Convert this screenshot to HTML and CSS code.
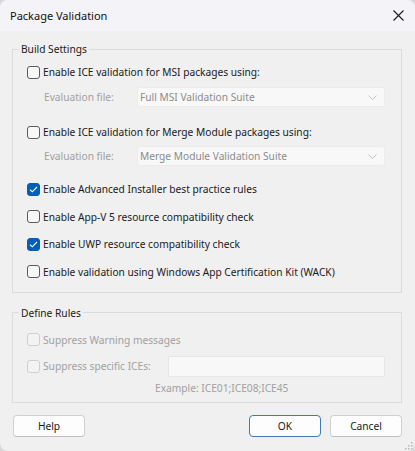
FILE: index.html
```html
<!DOCTYPE html>
<html>
<head>
<meta charset="utf-8">
<link rel="stylesheet" href="styles.css">
</head>
<body>
<div class="window">
  <div class="titlebar">
    <span class="title">Package Validation</span>
    <svg class="close" width="11" height="11" viewBox="0 0 11 11"><path d="M0.5 0.5L10.5 10.5M10.5 0.5L0.5 10.5" stroke="#1b1b1b" stroke-width="1.1" fill="none"/></svg>
  </div>
  <div class="body">
    <fieldset class="group build">
      <legend>Build Settings</legend>
      <div class="inner">
        <label class="check r1"><span class="box"></span><span>Enable ICE validation for MSI packages using:</span></label>
        <div class="evalrow r2"><span class="evallabel">Evaluation file:</span><div class="combo"><span>Full MSI Validation Suite</span><svg class="chev" width="9" height="5" viewBox="0 0 9 5"><path d="M0.5 0.5L4.5 4.5L8.5 0.5" stroke="#c4c4c4" fill="none"/></svg></div></div>
        <label class="check r3"><span class="box"></span><span>Enable ICE validation for Merge Module packages using:</span></label>
        <div class="evalrow r4"><span class="evallabel">Evaluation file:</span><div class="combo"><span>Merge Module Validation Suite</span><svg class="chev" width="9" height="5" viewBox="0 0 9 5"><path d="M0.5 0.5L4.5 4.5L8.5 0.5" stroke="#c4c4c4" fill="none"/></svg></div></div>
        <label class="check r5"><span class="box checked"><svg width="9" height="7" viewBox="0 0 9 7"><path d="M1 3.6L3.3 5.8L8 1" stroke="#fff" stroke-width="1.1" fill="none"/></svg></span><span>Enable Advanced Installer best practice rules</span></label>
        <label class="check r6"><span class="box"></span><span>Enable App-V 5 resource compatibility check</span></label>
        <label class="check r6"><span class="box checked"><svg width="9" height="7" viewBox="0 0 9 7"><path d="M1 3.6L3.3 5.8L8 1" stroke="#fff" stroke-width="1.1" fill="none"/></svg></span><span>Enable UWP resource compatibility check</span></label>
        <label class="check r6"><span class="box"></span><span>Enable validation using Windows App Certification Kit (WACK)</span></label>
      </div>
    </fieldset>
    <fieldset class="group rules">
      <legend>Define Rules</legend>
      <div class="inner">
        <label class="check disabled s1"><span class="box"></span><span>Suppress Warning messages</span></label>
        <div class="supprow">
          <label class="check disabled"><span class="box"></span><span>Suppress specific ICEs:</span></label>
          <div class="textfield"></div>
        </div>
        <div class="example">Example: ICE01;ICE08;ICE45</div>
      </div>
    </fieldset>
    <div class="buttons">
      <button class="btn">Help</button>
      <span class="spacer"></span>
      <button class="btn default">OK</button>
      <button class="btn">Cancel</button>
    </div>
  </div>
  <svg class="grip" width="8" height="8" viewBox="0 0 8 8"><g fill="#b8b8b8"><rect x="6" y="0" width="1.5" height="1.5"/><rect x="3" y="3" width="1.5" height="1.5"/><rect x="6" y="3" width="1.5" height="1.5"/><rect x="0" y="6" width="1.5" height="1.5"/><rect x="3" y="6" width="1.5" height="1.5"/><rect x="6" y="6" width="1.5" height="1.5"/></g></svg>
</div>
</body>
</html>
```
FILE: styles.css
```css
* { box-sizing: border-box; }
html, body { margin: 0; padding: 0; }
body {
  background: #d9d9dc;
  font-family: "Noto Sans", "Open Sans", sans-serif;
  font-size: 10.2px;
  color: #1a1a1a;
}
.window {
  position: relative;
  width: 415px;
  height: 451px;
  background: #f0f0f0;
  border-radius: 8px;
  overflow: hidden;
}
.titlebar {
  height: 31px;
  background: #f3f3f8;
  display: flex;
  align-items: center;
  padding-left: 10px;
  padding-right: 11px;
}
.title { flex: 1; font-size: 11px; line-height: 16px; color: #111; }
.close { display: block; }
.body { padding: 0 13px 0 12px; }
.group {
  margin: 0;
  padding: 0;
  border: 1px solid #dcdcdc;
  min-width: 0;
}
.group legend {
  margin-left: 6px;
  padding: 0 2px;
  line-height: 16px;
  color: #1a1a1a;
}
.build { margin-top: 10px; }
.build .inner { padding: 5px 16px 10px 14px; }
.rules { margin-top: 12px; }
.rules .inner { padding: 9px 16px 7px 14px; }
.check {
  display: flex;
  align-items: center;
  height: 20px;
  line-height: 20px;
  white-space: nowrap;
}
.box {
  width: 13px;
  height: 13px;
  border: 1px solid #5b5b5b;
  border-radius: 3px;
  background: #f7f7f7;
  margin-right: 3px;
  flex: none;
  display: flex;
  align-items: center;
  justify-content: center;
}
.box.checked { background: #005fb8; border-color: #005fb8; }
.box svg { display: block; }
.check.disabled { color: #a0a0a0; }
.check.disabled .box { border-color: #cfcfcf; background: #f3f3f3; }
.evalrow {
  display: flex;
  align-items: center;
  height: 20px;
  padding-left: 17px;
}
.evallabel { width: 93px; color: #a0a0a0; flex: none; }
.combo {
  flex: 1;
  height: 20px;
  background: #f8f8f8;
  border: 1px solid #ececec;
  border-radius: 2px;
  display: flex;
  align-items: center;
  padding: 0 7px 0 2px;
  color: #8c8c8c;
}
.combo span { flex: 1; }
.chev { display: block; }
.r2 { margin-top: 5px; }
.r3 { margin-top: 15px; }
.r4 { margin-top: 4px; }
.r5 { margin-top: 13px; }
.r6 { margin-top: 7.5px; }
.supprow {
  display: flex;
  align-items: center;
  margin-top: 6px;
  height: 21px;
}
.supprow .check { width: 141px; flex: none; }
.textfield {
  flex: 1;
  height: 21px;
  background: #f8f8f8;
  border: 1px solid #e6e6e6;
  border-radius: 2px;
}
.example {
  margin-top: 4px;
  padding-left: 128px;
  line-height: 14px;
  color: #a0a0a0;
}
.buttons {
  display: flex;
  margin-top: 12px;
  padding-left: 1px;
  gap: 9px;
}
.spacer { flex: 1; }
.btn {
  width: 72px;
  height: 22px;
  background: #fdfdfd;
  border: 1px solid #d0d0d0;
  border-bottom-color: #bfbfbf;
  border-radius: 4px;
  font-family: inherit;
  font-size: inherit;
  color: #1a1a1a;
  padding: 0;
  margin: 0;
}
.btn.default { border-color: #3d7ab8; }
.grip { position: absolute; right: 2px; bottom: 1px; }
```
